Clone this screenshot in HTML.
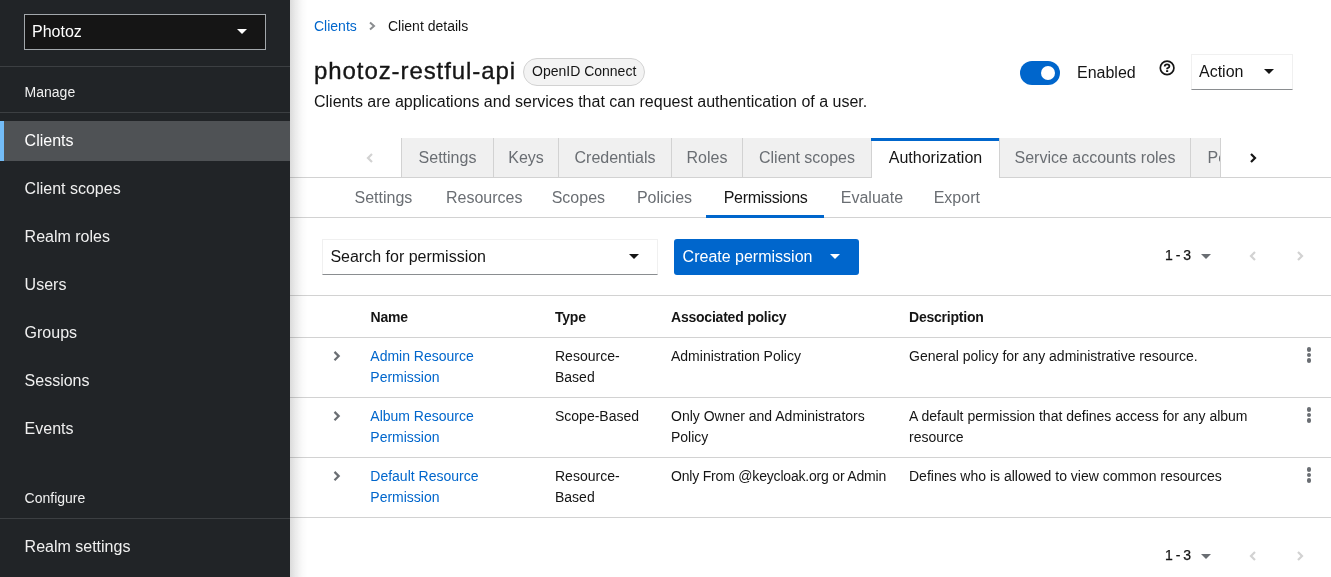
<!DOCTYPE html>
<html><head><meta charset="utf-8"><title>Keycloak</title>
<style>
*{box-sizing:border-box;margin:0;padding:0}
html,body{width:1331px;height:577px;overflow:hidden;background:#fff;font-family:"Liberation Sans",sans-serif;color:#151515}
.abs{position:absolute}
.t{position:absolute;white-space:nowrap}
#side{position:absolute;left:0;top:0;width:290px;height:577px;background:#212427;z-index:2}
#shadow{position:absolute;left:290px;top:0;width:18px;height:577px;background:linear-gradient(to right,rgba(3,3,3,.14),rgba(3,3,3,.07) 35%,rgba(3,3,3,.02) 70%,rgba(3,3,3,0));z-index:1}
.caret{width:0;height:0;border-left:5px solid transparent;border-right:5px solid transparent;border-top:5px solid #fff}
.tab{border-left:1px solid #d2d2d2;border-right:1px solid #d2d2d2}
.hl{position:absolute;left:290px;width:1041px;height:1px;background:#d2d2d2}
</style></head><body>
<div id="wrap" style="position:absolute;left:0;top:0;width:1331px;height:577px;will-change:transform">
<div id="side">
<div class="abs" style="left:24px;top:14px;width:242px;height:36px;background:#151515;border:1px solid #a2a7ab"></div>
<div class="t" style="left:32px;top:24px;font-size:16px;line-height:16px;color:#ffffff;font-weight:normal;">Photoz</div>
<div class="abs caret" style="left:237px;top:29px"></div>
<div class="abs" style="left:0;top:66px;width:290px;height:1px;background:#3c3f42"></div>
<div class="abs" style="left:0;top:112px;width:290px;height:1px;background:#3c3f42"></div>
<div class="abs" style="left:0;top:518px;width:290px;height:1px;background:#3c3f42"></div>
<div class="t" style="left:24.6px;top:85px;font-size:14px;line-height:14px;color:#f0f0f0;font-weight:normal;">Manage</div>
<div class="abs" style="left:0;top:121px;width:290px;height:40px;background:#4f5255"></div>
<div class="abs" style="left:0;top:121px;width:4px;height:40px;background:#73bcf7"></div>
<div class="t" style="left:24.6px;top:133px;font-size:16px;line-height:16px;color:#ffffff;font-weight:normal;">Clients</div>
<div class="t" style="left:24.6px;top:181px;font-size:16px;line-height:16px;color:#f0f0f0;font-weight:normal;">Client scopes</div>
<div class="t" style="left:24.6px;top:229px;font-size:16px;line-height:16px;color:#f0f0f0;font-weight:normal;">Realm roles</div>
<div class="t" style="left:24.6px;top:277px;font-size:16px;line-height:16px;color:#f0f0f0;font-weight:normal;">Users</div>
<div class="t" style="left:24.6px;top:325px;font-size:16px;line-height:16px;color:#f0f0f0;font-weight:normal;">Groups</div>
<div class="t" style="left:24.6px;top:373px;font-size:16px;line-height:16px;color:#f0f0f0;font-weight:normal;">Sessions</div>
<div class="t" style="left:24.6px;top:421px;font-size:16px;line-height:16px;color:#f0f0f0;font-weight:normal;">Events</div>
<div class="t" style="left:24.6px;top:491px;font-size:14px;line-height:14px;color:#f0f0f0;font-weight:normal;">Configure</div>
<div class="t" style="left:24.6px;top:539px;font-size:16px;line-height:16px;color:#f0f0f0;font-weight:normal;">Realm settings</div>
</div>
<div id="shadow"></div>
<div class="t" style="left:314px;top:19px;font-size:14px;line-height:14px;color:#0066cc;font-weight:normal;">Clients</div>
<svg class="abs" style="left:368px;top:21px" width="9" height="10" viewBox="0 0 9 10"><path d="M2 1.5 L6 5 L2 8.5" fill="none" stroke="#8a8d90" stroke-width="2"/></svg>
<div class="t" style="left:388px;top:19px;font-size:14px;line-height:14px;color:#151515;font-weight:normal;">Client details</div>
<div class="t" style="left:314px;top:59px;font-size:24px;line-height:24px;color:#151515;font-weight:normal;letter-spacing:0.92px;-webkit-text-stroke:0.35px #151515">photoz-restful-api</div>
<div class="abs" style="left:523px;top:58px;width:122px;height:28px;border:1px solid #d2d2d2;background:#f3f3f3;border-radius:14px"></div>
<div class="t" style="left:532px;top:64px;font-size:14px;line-height:14px;color:#151515;font-weight:normal;">OpenID Connect</div>
<div class="t" style="left:314px;top:94px;font-size:16px;line-height:16px;color:#151515;font-weight:normal;">Clients are applications and services that can request authentication of a user.</div>
<div class="abs" style="left:1020px;top:61px;width:40px;height:24px;border-radius:12px;background:#0066cc"></div>
<div class="abs" style="left:1041px;top:66px;width:14px;height:14px;border-radius:7px;background:#fff"></div>
<div class="t" style="left:1077px;top:65px;font-size:16px;line-height:16px;color:#151515;font-weight:normal;">Enabled</div>
<svg class="abs" style="left:1159px;top:60px" width="16" height="16" viewBox="0 0 16 16"><circle cx="8.1" cy="7.9" r="6.8" fill="none" stroke="#151515" stroke-width="1.7"/><path d="M5.7 6.5 C5.7 5.1 6.8 4.4 8.1 4.4 C9.5 4.4 10.4 5.2 10.4 6.3 C10.4 7.6 9.1 7.8 8.2 8.4 L8.2 9.3" stroke="#151515" stroke-width="1.8" fill="none"/><rect x="7.1" y="10.2" width="2.1" height="1.8" fill="#151515"/></svg>
<div class="abs" style="left:1191px;top:54px;width:102px;height:36px;border:1px solid #f0f0f0;border-bottom-color:#8a8d90"></div>
<div class="t" style="left:1199px;top:64px;font-size:16px;line-height:16px;color:#151515;font-weight:normal;">Action</div>
<div class="abs caret" style="left:1264px;top:69px;border-top-color:#151515"></div>
<div class="hl" style="top:177px"></div>
<div class="abs tab" style="left:401px;top:138px;width:93px;height:39px;background:#f0f0f0"></div>
<div class="abs" style="left:402px;top:150px;width:91px;text-align:center;font-size:16px;line-height:16px;color:#6a6e73;white-space:nowrap">Settings</div>
<div class="abs tab" style="left:493px;top:138px;width:66px;height:39px;background:#f0f0f0"></div>
<div class="abs" style="left:494px;top:150px;width:64px;text-align:center;font-size:16px;line-height:16px;color:#6a6e73;white-space:nowrap">Keys</div>
<div class="abs tab" style="left:558px;top:138px;width:114px;height:39px;background:#f0f0f0"></div>
<div class="abs" style="left:559px;top:150px;width:112px;text-align:center;font-size:16px;line-height:16px;color:#6a6e73;white-space:nowrap">Credentials</div>
<div class="abs tab" style="left:671px;top:138px;width:72px;height:39px;background:#f0f0f0"></div>
<div class="abs" style="left:672px;top:150px;width:70px;text-align:center;font-size:16px;line-height:16px;color:#6a6e73;white-space:nowrap">Roles</div>
<div class="abs tab" style="left:742px;top:138px;width:130px;height:39px;background:#f0f0f0"></div>
<div class="abs" style="left:743px;top:150px;width:128px;text-align:center;font-size:16px;line-height:16px;color:#6a6e73;white-space:nowrap">Client scopes</div>
<div class="abs tab" style="left:871px;top:138px;width:129px;height:40px;background:#fff"></div>
<div class="abs" style="left:871px;top:138px;width:129px;height:3px;background:#0066cc"></div>
<div class="abs" style="left:872px;top:150px;width:127px;text-align:center;font-size:16px;line-height:16px;color:#151515;white-space:nowrap">Authorization</div>
<div class="abs tab" style="left:999px;top:138px;width:192px;height:39px;background:#f0f0f0"></div>
<div class="abs" style="left:1000px;top:150px;width:190px;text-align:center;font-size:16px;line-height:16px;color:#6a6e73;white-space:nowrap">Service accounts roles</div>
<div class="abs tab" style="left:1190px;top:138px;width:31px;height:39px;background:#f0f0f0"></div>
<div class="abs" style="left:1191px;top:138px;width:29px;height:39px;overflow:hidden"><div class="t" style="left:16.5px;top:12px;font-size:16px;line-height:16px;color:#6a6e73">Pe</div></div>
<svg class="abs" style="left:365px;top:152px" width="10" height="12" viewBox="0 0 10 12"><path d="M7 2 L3 6 L7 10" fill="none" stroke="#d2d2d2" stroke-width="2.2"/></svg>
<svg class="abs" style="left:1248px;top:152px" width="10" height="12" viewBox="0 0 10 12"><path d="M3 2 L7 6 L3 10" fill="none" stroke="#151515" stroke-width="2.2"/></svg>
<div class="hl" style="top:217px"></div>
<div class="t" style="left:354.5px;top:190px;font-size:16px;line-height:16px;color:#6a6e73;font-weight:normal;">Settings</div>
<div class="t" style="left:446px;top:190px;font-size:16px;line-height:16px;color:#6a6e73;font-weight:normal;">Resources</div>
<div class="t" style="left:551.7px;top:190px;font-size:16px;line-height:16px;color:#6a6e73;font-weight:normal;">Scopes</div>
<div class="t" style="left:636.9px;top:190px;font-size:16px;line-height:16px;color:#6a6e73;font-weight:normal;">Policies</div>
<div class="t" style="left:723.7px;top:190px;font-size:16px;line-height:16px;color:#151515;font-weight:normal;letter-spacing:-0.3px">Permissions</div>
<div class="t" style="left:840.8px;top:190px;font-size:16px;line-height:16px;color:#6a6e73;font-weight:normal;">Evaluate</div>
<div class="t" style="left:933.7px;top:190px;font-size:16px;line-height:16px;color:#6a6e73;font-weight:normal;">Export</div>
<div class="abs" style="left:706px;top:215px;width:118px;height:3px;background:#0066cc"></div>
<div class="abs" style="left:322px;top:239px;width:336px;height:36px;border:1px solid #f0f0f0;border-bottom-color:#8a8d90"></div>
<div class="t" style="left:330.4px;top:249px;font-size:16px;line-height:16px;color:#151515;font-weight:normal;">Search for permission</div>
<div class="abs caret" style="left:629px;top:254px;border-top-color:#151515"></div>
<div class="abs" style="left:674px;top:239px;width:185px;height:36px;border-radius:3px;background:#0066cc"></div>
<div class="t" style="left:682.6px;top:249px;font-size:16px;line-height:16px;color:#ffffff;font-weight:normal;">Create permission</div>
<div class="abs caret" style="left:830px;top:254px;border-top-color:#ffffff"></div>
<div class="t" style="left:1165px;top:248px;font-size:14px;line-height:14px;color:#151515;font-weight:normal;-webkit-text-stroke:0.25px #151515;word-spacing:-1px">1 - 3</div>
<div class="abs caret" style="left:1201px;top:253.5px;border-top-color:#6a6e73"></div>
<svg class="abs" style="left:1248px;top:250px" width="10" height="12" viewBox="0 0 10 12"><path d="M7 2 L3 6 L7 10" fill="none" stroke="#d2d2d2" stroke-width="2.2"/></svg>
<svg class="abs" style="left:1295px;top:250px" width="10" height="12" viewBox="0 0 10 12"><path d="M3 2 L7 6 L3 10" fill="none" stroke="#d2d2d2" stroke-width="2.2"/></svg>
<div class="hl" style="top:295px"></div>
<div class="t" style="left:370.6px;top:310px;font-size:14px;line-height:14px;color:#151515;font-weight:bold;letter-spacing:-0.22px">Name</div>
<div class="t" style="left:555px;top:310px;font-size:14px;line-height:14px;color:#151515;font-weight:bold;letter-spacing:-0.22px">Type</div>
<div class="t" style="left:671px;top:310px;font-size:14px;line-height:14px;color:#151515;font-weight:bold;letter-spacing:-0.22px">Associated policy</div>
<div class="t" style="left:909px;top:310px;font-size:14px;line-height:14px;color:#151515;font-weight:bold;letter-spacing:-0.22px">Description</div>
<div class="hl" style="top:337px"></div>
<div class="hl" style="top:397px"></div>
<div class="hl" style="top:457px"></div>
<div class="hl" style="top:517px"></div>
<svg class="abs" style="left:331px;top:350px" width="12" height="12" viewBox="0 0 12 12"><path d="M3.5 1.9 L7.7 6.1 L3.5 10.3" fill="none" stroke="#6a6e73" stroke-width="2.2"/></svg>
<div class="t" style="left:370.3px;top:346px;font-size:14px;line-height:21px;color:#0066cc">Admin Resource<br>Permission</div>
<div class="t" style="left:555px;top:346px;font-size:14px;line-height:21px;color:#151515">Resource-<br>Based</div>
<div class="t" style="left:671px;top:346px;font-size:14px;line-height:21px;color:#151515">Administration Policy</div>
<div class="t" style="left:909px;top:346px;font-size:14px;line-height:21px;color:#151515">General policy for any administrative resource.</div>
<div class="abs" style="left:1306.8px;top:347.1px;width:4.5px;height:4.5px;border-radius:50%;background:#6a6e73"></div>
<div class="abs" style="left:1306.8px;top:352.70000000000005px;width:4.5px;height:4.5px;border-radius:50%;background:#6a6e73"></div>
<div class="abs" style="left:1306.8px;top:358.3px;width:4.5px;height:4.5px;border-radius:50%;background:#6a6e73"></div>
<svg class="abs" style="left:331px;top:410px" width="12" height="12" viewBox="0 0 12 12"><path d="M3.5 1.9 L7.7 6.1 L3.5 10.3" fill="none" stroke="#6a6e73" stroke-width="2.2"/></svg>
<div class="t" style="left:370.3px;top:406px;font-size:14px;line-height:21px;color:#0066cc">Album Resource<br>Permission</div>
<div class="t" style="left:555px;top:406px;font-size:14px;line-height:21px;color:#151515">Scope-Based</div>
<div class="t" style="left:671px;top:406px;font-size:14px;line-height:21px;color:#151515">Only Owner and Administrators<br>Policy</div>
<div class="t" style="left:909px;top:406px;font-size:14px;line-height:21px;color:#151515">A default permission that defines access for any album<br>resource</div>
<div class="abs" style="left:1306.8px;top:407.1px;width:4.5px;height:4.5px;border-radius:50%;background:#6a6e73"></div>
<div class="abs" style="left:1306.8px;top:412.70000000000005px;width:4.5px;height:4.5px;border-radius:50%;background:#6a6e73"></div>
<div class="abs" style="left:1306.8px;top:418.3px;width:4.5px;height:4.5px;border-radius:50%;background:#6a6e73"></div>
<svg class="abs" style="left:331px;top:470px" width="12" height="12" viewBox="0 0 12 12"><path d="M3.5 1.9 L7.7 6.1 L3.5 10.3" fill="none" stroke="#6a6e73" stroke-width="2.2"/></svg>
<div class="t" style="left:370.3px;top:466px;font-size:14px;line-height:21px;color:#0066cc">Default Resource<br>Permission</div>
<div class="t" style="left:555px;top:466px;font-size:14px;line-height:21px;color:#151515">Resource-<br>Based</div>
<div class="t" style="left:671px;top:466px;font-size:14px;line-height:21px;color:#151515"><span style="letter-spacing:-0.19px">Only From @keycloak.org or Admin</span></div>
<div class="t" style="left:909px;top:466px;font-size:14px;line-height:21px;color:#151515">Defines who is allowed to view common resources</div>
<div class="abs" style="left:1306.8px;top:467.1px;width:4.5px;height:4.5px;border-radius:50%;background:#6a6e73"></div>
<div class="abs" style="left:1306.8px;top:472.70000000000005px;width:4.5px;height:4.5px;border-radius:50%;background:#6a6e73"></div>
<div class="abs" style="left:1306.8px;top:478.3px;width:4.5px;height:4.5px;border-radius:50%;background:#6a6e73"></div>
<div class="t" style="left:1165px;top:548px;font-size:14px;line-height:14px;color:#151515;font-weight:normal;-webkit-text-stroke:0.25px #151515;word-spacing:-1px">1 - 3</div>
<div class="abs caret" style="left:1201px;top:553.5px;border-top-color:#6a6e73"></div>
<svg class="abs" style="left:1248px;top:550px" width="10" height="12" viewBox="0 0 10 12"><path d="M7 2 L3 6 L7 10" fill="none" stroke="#d2d2d2" stroke-width="2.2"/></svg>
<svg class="abs" style="left:1295px;top:550px" width="10" height="12" viewBox="0 0 10 12"><path d="M3 2 L7 6 L3 10" fill="none" stroke="#d2d2d2" stroke-width="2.2"/></svg>

</div>
</body></html>
